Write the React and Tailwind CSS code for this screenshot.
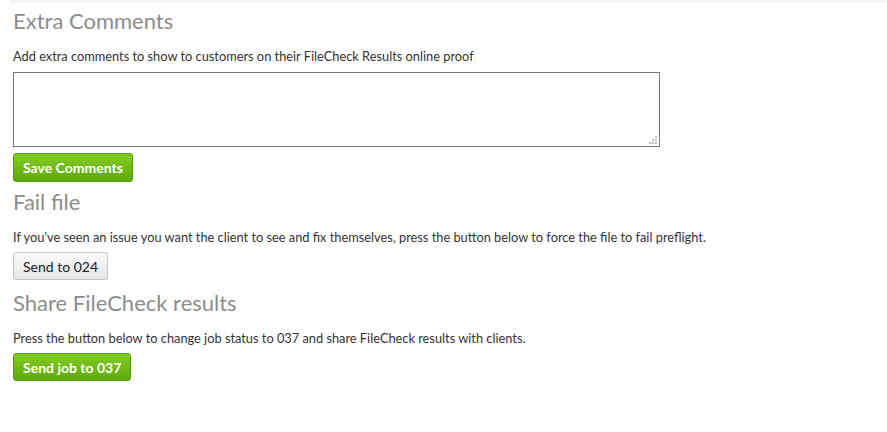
export default function App() {
  const font = { fontFamily: 'Lato, "Open Sans", sans-serif' }
  return (
    <div className="min-h-screen bg-white text-[#333]" style={font}>
      <div className="ml-[10px] h-[3px] bg-[#f4f4f4]" />
      <div className="px-[13px]">
        <h2 className="mt-[6px] text-[22px] leading-[24px] text-[#8c8c8c]">Extra Comments</h2>
        <p className="mt-[15px] text-[12.8px] leading-[16px]">
          Add extra comments to show to customers on their FileCheck Results online proof
        </p>
        <div className="relative mt-[8px] w-[647px]">
          <textarea className="block h-[75px] w-full resize-none border border-[#777] bg-white p-1 text-[13px] outline-none" />
          {/* resize grip */}
          <svg className="absolute bottom-[3px] right-[3px]" width="9" height="9" viewBox="0 0 9 9" fill="#bdbdbd">
            <rect x="7" y="1" width="2" height="2" />
            <rect x="4" y="4" width="2" height="2" />
            <rect x="7" y="4" width="2" height="2" />
            <rect x="1" y="7" width="2" height="2" />
            <rect x="4" y="7" width="2" height="2" />
            <rect x="7" y="7" width="2" height="2" />
          </svg>
        </div>
        <button className="mt-[6px] block h-[29px] rounded-[3px] border border-[#5a9e0c] bg-gradient-to-b from-[#84cc24] to-[#5fa80c] px-[9px] text-[14px] font-bold text-white">
          Save Comments
        </button>
        <h2 className="mt-[8px] text-[22px] leading-[24px] text-[#8c8c8c]">Fail file</h2>
        <p className="mt-[15px] text-[12.8px] leading-[16px]">
          If you've seen an issue you want the client to see and fix themselves, press the button below to force the file to fail preflight.
        </p>
        <button className="mt-[7px] block h-[28px] rounded-[3px] border border-[#c4c4c4] bg-gradient-to-b from-[#fafafa] to-[#e6e6e6] px-[9px] text-[14px] text-[#222]">
          Send to 024
        </button>
        <h2 className="mt-[11px] text-[22px] leading-[24px] text-[#8c8c8c]">Share FileCheck results</h2>
        <p className="mt-[15px] text-[12.8px] leading-[16px]">
          Press the button below to change job status to 037 and share FileCheck results with clients.
        </p>
        <button className="mt-[7px] block h-[28px] rounded-[3px] border border-[#5a9e0c] bg-gradient-to-b from-[#84cc24] to-[#5fa80c] px-[9px] text-[14px] font-bold text-white">
          Send job to 037
        </button>
      </div>
    </div>
  )
}
